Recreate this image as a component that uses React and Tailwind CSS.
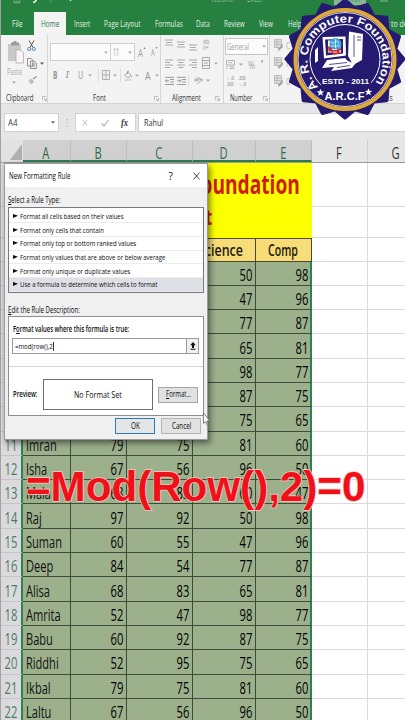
import { useLayoutEffect, useRef } from "react";

// Condenses a line of text horizontally so that it fills the width of its box.
function Fit({ className = "", children }) {
  const box = useRef(null);
  const line = useRef(null);
  useLayoutEffect(() => {
    const k = box.current.getBoundingClientRect().width / line.current.offsetWidth;
    line.current.style.transform = `scaleX(${k})`;
  }, []);
  return (
    <span ref={box} className={`block shrink-0 whitespace-nowrap ${className}`}>
      <span ref={line} className="inline-block origin-left">{children}</span>
    </span>
  );
}

const rows = [
  ["4", "", "", "", "50", "98"],
  ["5", "", "", "", "47", "96"],
  ["6", "", "", "", "77", "87"],
  ["7", "", "", "", "65", "81"],
  ["8", "", "", "", "98", "77"],
  ["9", "", "", "", "87", "75"],
  ["10", "", "", "", "75", "65"],
  ["11", "Imran", "79", "75", "81", "60"],
  ["12", "Isha", "67", "56", "96", "50"],
  ["13", "Mala", "68", "83", "60", "47"],
  ["14", "Raj", "97", "92", "50", "98"],
  ["15", "Suman", "60", "55", "47", "96"],
  ["16", "Deep", "84", "54", "77", "87"],
  ["17", "Alisa", "68", "83", "65", "81"],
  ["18", "Amrita", "52", "47", "98", "77"],
  ["19", "Babu", "60", "92", "87", "75"],
  ["20", "Riddhi", "52", "95", "75", "65"],
  ["21", "Ikbal", "79", "75", "81", "60"],
  ["22", "Laltu", "67", "56", "96", "50"],
];

const cols = "grid grid-cols-[22px_47.5px_56px_66px_63px_56px_56.5px_56px]";

function Caret({ className = "" }) {
  return (
    <svg viewBox="0 0 4 3" className={`h-[3px] w-[4px] shrink-0 fill-[#a9a9a9] ${className}`}>
      <path d="M0 .5h4L2 2.8z" />
    </svg>
  );
}

function Launcher({ className = "" }) {
  return (
    <svg viewBox="0 0 6 6" className={`h-[5px] w-[5px] shrink-0 fill-none stroke-[#a0a0a0] ${className}`} strokeWidth=".8">
      <path d="M.5 5V.5H5M2.3 2.3l3 3M5.4 2.8v2.6H2.8" />
    </svg>
  );
}

function Lines({ d, className = "" }) {
  return (
    <svg viewBox="0 0 8 9" className={`h-[9px] w-[8px] shrink-0 fill-none stroke-[#a3a3a3] ${className}`} strokeWidth=".9">
      <path d={d} />
    </svg>
  );
}

function TitleBar() {
  return (
    <div className="flex h-[12px] items-start overflow-hidden text-[#8fbf9f]">
      <svg viewBox="0 0 8 6" className="ml-[12px] h-[5px] w-[8px] shrink-0 fill-none stroke-[#7fb592]" strokeWidth="1">
        <path d="M.5 0v3.500h7V0M2.5 3.500V1.500h3v2" />
      </svg>
      <svg viewBox="0 0 42 5" className="ml-[11px] h-[5px] w-[42px] shrink-0 fill-none" strokeWidth="1.4">
        <path d="M4 0Q4 2 1 2.500" stroke="#fff" />
        <path d="M20 0Q16 1.500 19 2.400" stroke="#5c9c74" strokeWidth="1" />
        <path d="M38.500 0v1" stroke="#e8f4ec" />
      </svg>
      <Fit className="-mt-[6px] ml-[137px] w-[25px] text-[9px] leading-[10px]">VLOOKUP</Fit>
      <Fit className="-mt-[6px] ml-[11px] w-[15px] text-[9px] leading-[10px]">Excel</Fit>
      <div className="ml-[72px] h-[5px] w-[32px] shrink-0 bg-[#86b896]">
        <Fit className="-mt-[6px] ml-[8px] w-[18px] text-[9px] leading-[10px] text-[#2b7a4a]">Sign in</Fit>
      </div>
      <div className="ml-[14px] h-[2px] w-[8px] bg-[#5c9c74]" />
    </div>
  );
}

function Tabs() {
  return (
    <div className="flex h-[23px] items-center text-[9.5px] leading-none text-[#e4f3e9]">
      <Fit className="ml-[10.5px] w-[10.5px]">File</Fit>
      <div className="ml-[12px] flex h-[23px] w-[32px] shrink-0 items-center justify-center bg-[#f3f3f3] text-[#2b7a4a]">
        <Fit className="w-[18.5px]">Home</Fit>
      </div>
      <Fit className="ml-[7.5px] w-[16.5px]">Insert</Fit>
      <Fit className="ml-[14px] w-[36.5px]">Page Layout</Fit>
      <Fit className="ml-[14px] w-[27.5px]">Formulas</Fit>
      <Fit className="ml-[14px] w-[14px]">Data</Fit>
      <Fit className="ml-[14px] w-[20.5px]">Review</Fit>
      <Fit className="ml-[14px] w-[14px]">View</Fit>
      <Fit className="ml-[15px] w-[14px]">Help</Fit>
      <Fit className="ml-[46px] w-[60px]">Tell me what to do</Fit>
    </div>
  );
}

function ClipboardGroup() {
  return (
    <div className="flex w-[47px] shrink-0 flex-col border-r border-[#d6d6d6]">
      <div className="flex h-[56px]">
        <div className="flex w-[24px] flex-col items-start pl-[6px] pt-[5px]">
          <svg viewBox="0 0 17 24" className="h-[24px] w-[17px]">
            <path d="M1 4h13v17H1z" fill="#c9c9c9" />
            <path d="M4 2.500h2l1-1.500h2l1 1.500h2V5.500H4z" fill="#9c9c9c" />
            <path d="M9 10h5l2.500 2.500V23H9z" fill="#f7f3f6" stroke="#b5a9b3" strokeWidth=".8" />
          </svg>
          <Fit className="mt-[3px] w-[15px] text-[9px] leading-[10px] text-[#a8a8a8]">Paste</Fit>
          <Caret className="ml-[5px] mt-[4px]" />
        </div>
        <div className="flex flex-col pl-[2px] pt-[5px]">
          <svg viewBox="0 0 9 12" className="h-[12px] w-[9px] fill-none" strokeWidth="1">
            <path d="M2 .5l4 7M7 .5l-4 7" stroke="#555" />
            <circle cx="2.200" cy="9" r="1.600" stroke="#5b8fb0" />
            <circle cx="6.800" cy="9" r="1.600" stroke="#5b8fb0" />
          </svg>
          <div className="mt-[6px] flex items-center">
            <svg viewBox="0 0 10 11" className="h-[11px] w-[10px] fill-[#f7f7f7] stroke-[#777]" strokeWidth=".8">
              <path d="M.5.5H4L6 2.500V8H.5zM3.500 3H7L9.300 5v5.500H3.500zM5 6h3M5 8h3" />
            </svg>
            <svg viewBox="0 0 4 3" className="ml-[3px] h-[3px] w-[4px] fill-[#555]">
              <path d="M0 .5h4L2 2.800z" />
            </svg>
          </div>
          <svg viewBox="0 0 9 9" className="ml-[1px] mt-[7px] h-[9px] w-[9px]">
            <path d="M8.500.5L5 3" stroke="#999" strokeWidth="1.400" />
            <path d="M3 2.500l3 3-2.500 3L.5 5z" fill="#bdbdbd" />
          </svg>
        </div>
      </div>
      <div className="flex h-[12px] items-center text-[9px] leading-none text-[#333]">
        <Fit className="ml-[5px] mt-[1px] w-[27.5px]">Clipboard</Fit>
        <Launcher className="ml-[8px] mt-[2px]" />
      </div>
    </div>
  );
}

function FontGroup() {
  return (
    <div className="flex w-[113px] shrink-0 flex-col border-r border-[#d6d6d6]">
      <div className="flex h-[56px] flex-col">
        <div className="mt-[8px] flex h-[18px] items-center pl-[2px] text-[10px] leading-none text-[#a0a0a0]">
          <div className="flex h-[18px] w-[61px] shrink-0 items-center justify-end border border-[#cfcfcf] bg-[#fbfbfb] pr-[2px]">
            <Caret />
          </div>
          <div className="-ml-px flex h-[18px] w-[25px] shrink-0 items-center border border-[#cfcfcf] bg-[#fbfbfb] pl-[2px]">
            <Fit className="w-[6px]">11</Fit>
            <Caret className="ml-[9px]" />
          </div>
          <Fit className="ml-[3px] w-[5px] text-[11px]">A</Fit>
          <svg viewBox="0 0 3 3" className="-mt-[8px] h-[2px] w-[3px] fill-[#8a8a8a]"><path d="M0 3h3L1.500 0z" /></svg>
          <Fit className="ml-[5px] w-[4px] text-[9px]">A</Fit>
          <svg viewBox="0 0 3 3" className="-mt-[8px] h-[2px] w-[3px] fill-[#8a8a8a]"><path d="M0 0h3L1.500 3z" /></svg>
        </div>
        <div className="mt-[7px] flex h-[14px] items-center text-[10px] leading-none text-[#929292]">
          <Fit className="ml-[5px] w-[4.500px] font-bold">B</Fit>
          <span className="ml-[8px] w-[4px] font-serif italic">I</span>
          <Fit className="ml-[8px] w-[5px] underline">U</Fit>
          <Caret className="ml-[5px]" />
          <div className="ml-[6px] h-[13px] w-px bg-[#dcdcdc]" />
          <svg viewBox="0 0 8 10" className="ml-[3px] h-[10px] w-[8px] fill-none stroke-[#a0a0a0]" strokeWidth=".8">
            <path d="M.5.5h7v9h-7zM4 .5v9M.5 5h7" />
          </svg>
          <Caret className="ml-[3px]" />
          <div className="ml-[3px] h-[13px] w-px bg-[#dcdcdc]" />
          <svg viewBox="0 0 9 11" className="ml-[3px] h-[11px] w-[9px] fill-none stroke-[#a0a0a0]" strokeWidth=".9">
            <path d="M3.500 2L.8 5.500 4 8l3-3zM3.500 4V1.200q1-1 1 1M7.300 5.500v2" />
            <path d="M.5 10h7" stroke="#cfcfcf" strokeWidth="1.500" />
          </svg>
          <Caret className="ml-[2px]" />
          <Fit className="ml-[6px] w-[5.500px] text-[11px]">A</Fit>
          <Caret className="ml-[5px]" />
        </div>
      </div>
      <div className="flex h-[12px] items-center text-[9px] leading-none text-[#333]">
        <Fit className="ml-[45px] mt-[1px] w-[13px]">Font</Fit>
        <Launcher className="ml-[48px] mt-[2px]" />
      </div>
    </div>
  );
}

function AlignmentGroup() {
  return (
    <div className="flex w-[63px] shrink-0 flex-col border-r border-[#d6d6d6]">
      <div className="flex h-[56px] flex-col pl-[4px]">
        <div className="mt-[4px] flex h-[14px] items-start">
          <Lines d="M0 1h8M1 3.500h6M0 6h8" />
          <Lines className="ml-[4px] mt-[2px]" d="M0 1h8M1 3.500h6M0 6h8" />
          <Lines className="ml-[4px] mt-[5px]" d="M0 1h8M1 3.500h6M0 6h8" />
          <div className="ml-[6px] flex flex-col text-[7px] leading-[5.500px] text-[#999]">
            <Fit className="w-[6px]">ab</Fit>
            <Fit className="w-[6px]">c↵</Fit>
          </div>
        </div>
        <div className="mt-[4px] flex h-[12px] items-center">
          <Lines d="M0 1h8M0 3.500h5M0 6h8M0 8.500h5" />
          <Lines className="ml-[4px]" d="M0 1h8M1.500 3.500h5M0 6h8M1.500 8.500h5" />
          <Lines className="ml-[4px]" d="M0 1h8M3 3.500h5M0 6h8M3 8.500h5" />
          <svg viewBox="0 0 8 12" className="ml-[5px] h-[12px] w-[8px] fill-none stroke-[#a0a0a0]" strokeWidth=".9">
            <path d="M.5.5h7v11h-7zM.5 3.500h7M.5 8.500h7M2 6h4" />
          </svg>
          <Caret className="ml-[4px]" />
        </div>
        <div className="mt-[5px] flex h-[13px] items-center">
          <svg viewBox="0 0 9 9" className="h-[10px] w-[9px] fill-none stroke-[#929292]" strokeWidth=".9">
            <path d="M0 .8h9M5 3h4M5 5.500h4M0 8h9M4 4.300H.5M2 2.800L.5 4.300 2 5.800" />
          </svg>
          <svg viewBox="0 0 9 9" className="ml-[3px] h-[10px] w-[9px] fill-none stroke-[#929292]" strokeWidth=".9">
            <path d="M0 .8h9M5 3h4M5 5.500h4M0 8h9M0 4.300h4M2.500 2.800L4 4.300 2.500 5.800" />
          </svg>
          <div className="ml-[2px] h-[12px] w-px bg-[#dcdcdc]" />
          <svg viewBox="0 0 10 10" className="ml-[5px] h-[11px] w-[9px] fill-none stroke-[#999]" strokeWidth=".9">
            <path d="M3.500 9.500L9 4M7 3.800h2.200V6" />
            <circle cx="2" cy="4.500" r="1.300" />
            <path d="M3 3l1.500 3M4 1l2 4M5.500 2.500q2-.5 1.500 1.500" />
          </svg>
          <Caret className="ml-[3px]" />
        </div>
      </div>
      <div className="flex h-[12px] items-center text-[9px] leading-none text-[#333]">
        <Fit className="ml-[11px] mt-[1px] w-[29px]">Alignment</Fit>
        <Launcher className="ml-[14px] mt-[2px]" />
      </div>
    </div>
  );
}

function NumberGroup() {
  return (
    <div className="flex w-[46px] shrink-0 flex-col border-r border-[#d6d6d6] text-[#a0a0a0]">
      <div className="flex h-[56px] flex-col pl-[1px]">
        <div className="mt-[3px] flex h-[17px] w-[43px] items-center border border-[#c6c6c6] bg-[#fbfbfb] text-[9px] leading-none">
          <Fit className="ml-[1px] w-[22px]">General</Fit>
          <Caret className="ml-[13px]" />
        </div>
        <div className="mt-[3px] flex h-[12px] items-center leading-none">
          <svg viewBox="0 0 10 11" className="ml-[1px] h-[11px] w-[9px] fill-none stroke-[#a3a3a3]" strokeWidth=".9">
            <path d="M.5 1h9v5h-9zM3 3.500h4M4 8h5M4 10h5M1 7v3" />
          </svg>
          <Caret className="ml-[4px]" />
          <Fit className="ml-[5px] w-[7px] text-[11px]">%</Fit>
          <span className="ml-[6px] text-[10px] font-bold">’</span>
        </div>
        <div className="mt-[4px] flex h-[13px] items-center">
          <div className="ml-[1px] flex flex-col text-[6px] font-semibold leading-[6px]">
            <Fit className="w-[8px]">←.0</Fit>
            <Fit className="w-[8px]">.00</Fit>
          </div>
          <div className="ml-[4px] flex flex-col text-[6px] font-semibold leading-[6px]">
            <Fit className="w-[8px]">.00</Fit>
            <Fit className="w-[8px]">→.0</Fit>
          </div>
        </div>
      </div>
      <div className="flex h-[12px] items-center text-[9px] leading-none text-[#333]">
        <Fit className="ml-[6px] mt-[1px] w-[22.500px]">Number</Fit>
        <Launcher className="ml-[10px] mt-[2px]" />
      </div>
    </div>
  );
}

function StylesGroup() {
  return (
    <div className="flex w-[134px] shrink-0 justify-between pl-[4px] pt-[4px]">
      <div className="flex flex-col gap-[6px] text-[9px] leading-none text-[#b0b0b0]">
        {["C", "F", "C"].map((c, i) => (
          <div key={i} className="flex h-[12px] items-center gap-[3px]">
            <svg viewBox="0 0 9 12" className="h-[12px] w-[9px] fill-[#e2e2e2] stroke-[#b3b3b3]" strokeWidth=".8">
              <path d="M.5.5h7v8h-7zM.5 3h7M.5 5.500h7M3 .5v8" />
              <path d="M4 10l4.500-5v3L5 11.500z" fill="#a0a0a0" />
            </svg>
            <Fit className="w-[4px]">{c}</Fit>
          </div>
        ))}
      </div>
      <Fit className="mr-[11px] mt-[54px] w-[15px] text-[9px] leading-[10px] text-[#333]">Cells</Fit>
    </div>
  );
}

function FormulaBar() {
  return (
    <div className="flex h-[36px] items-start bg-[#e6e6e6] pl-[3px] pt-[9px] text-[9.500px] leading-none text-[#333]">
      <div className="flex h-[19px] w-[55px] items-center justify-between border border-[#d2d2d2] bg-white px-[3px]">
        <Fit className="w-[9px]">A4</Fit>
        <svg viewBox="0 0 4 3" className="h-[3px] w-[4px] fill-[#666]"><path d="M0 .3h4L2 2.800z" /></svg>
      </div>
      <svg viewBox="0 0 2 10" className="ml-[7px] mt-[5px] h-[10px] w-[2px] fill-[#aaa]">
        <path d="M.5 1h1v1h-1zM.5 4.500h1v1h-1zM.5 8h1v1h-1z" />
      </svg>
      <div className="ml-[7px] flex h-[19px] w-[61px] items-center border border-[#d2d2d2] bg-white">
        <svg viewBox="0 0 6 8" className="ml-[6px] h-[7px] w-[6px] fill-none stroke-[#b5b5b5]" strokeWidth="1"><path d="M.5 1l5 6M5.500 1l-5 6" /></svg>
        <svg viewBox="0 0 8 8" className="ml-[13px] h-[8px] w-[8px] fill-none stroke-[#b5b5b5]" strokeWidth="1.200"><path d="M.5 4.500L3 7l4.500-6" /></svg>
        <Fit className="ml-[12px] w-[7px] font-['Liberation_Serif',serif] text-[11px] font-bold italic">fx</Fit>
      </div>
      <div className="ml-[2px] flex h-[19px] flex-1 items-center border border-r-0 border-[#d2d2d2] bg-white pl-[5px]">
        <Fit className="w-[19px]">Rahul</Fit>
      </div>
    </div>
  );
}

function Sheet() {
  const blank = "border-b border-r border-[#dadada] bg-white";
  const filled = "flex items-center justify-end border-b border-r border-[#3e4c3a] bg-[#9cb08c] pr-[2px] text-black";
  const digits = "inline-block origin-right scale-x-[0.7]";
  return (
    <div className="font-['Open_Sans',sans-serif] text-[16px] leading-none">
      <div className={`${cols} h-[23px] border-b border-[#9b9b9b] text-center text-[15.500px] leading-[26px] text-[#2f6b4a]`}>
        <div className="flex items-end justify-end bg-[#e2e2e2] pb-[2px] pr-[1px]">
          <svg viewBox="0 0 12 16" className="h-[16px] w-[12px] fill-[#b1b1b1]"><path d="M12 0v16H0z" /></svg>
        </div>
        {["A", "B", "C", "D", "E"].map((c) => (
          <div key={c} className="overflow-hidden border-b-2 border-r border-b-[#2f7a50] border-r-[#bdbdbd] bg-[#d0d0d0]">
            <span className="inline-block scale-x-[0.72]">{c}</span>
          </div>
        ))}
        {["F", "G"].map((c) => (
          <div key={c} className="overflow-hidden border-r border-[#cfcfcf] bg-[#e6e6e6] text-[#333]">
            <span className="inline-block scale-x-[0.72]">{c}</span>
          </div>
        ))}
      </div>
      <div className={`${cols} grid-rows-[43.500px_31px]`}>
        <div className="border-b border-[#c4c4c4] bg-[#dedee0]" />
        <div className="col-span-5 row-span-2 flex flex-col bg-[#fbff00] font-bold text-[#cf1b10]">
          <Fit className="ml-[167px] mt-[6px] w-[110px] text-[27px] leading-[30px]">Foundation</Fit>
          <Fit className="ml-[146px] mt-[6px] w-[43px] text-[21px] leading-[24px]">Sheet</Fit>
        </div>
        <div className={blank} />
        <div className={blank} />
        <div className="border-b border-[#c4c4c4] bg-[#dedee0]" />
        <div className={blank} />
        <div className={blank} />
      </div>
      <div className={`${cols} h-[24px] text-[15.500px] font-semibold text-[#1c1a10]`}>
        <div className="border-b border-[#c4c4c4] bg-[#dedee0]" />
        <div className="col-span-3 border-y border-[#4b4630] bg-[#f7dc77]" />
        <div className="flex items-center border-y border-r border-[#4b4630] bg-[#f7dc77] pt-[2px]">
          <Fit className="ml-[5px] w-[45px]">Science</Fit>
        </div>
        <div className="flex items-center justify-center border-y border-r border-[#4b4630] bg-[#f7dc77] pt-[2px]">
          <Fit className="w-[30px]">Comp</Fit>
        </div>
        <div className={blank} />
        <div className={blank} />
      </div>
      {rows.map(([n, name, ...marks]) => (
        <div key={n} className={`${cols} h-[24.300px]`}>
          <div className="flex items-center justify-end border-b border-r-2 border-b-[#c4c4c8] border-r-[#2f8055] bg-[#dadadd] pr-[4px] pt-[3px] text-[#4b7c62]">
            <span className={digits}>{n}</span>
          </div>
          <div className="flex items-center border-b border-r border-[#3e4c3a] bg-[#9cb08c] pl-[2.500px] pt-[3px] text-[#111]">
            <span className="inline-block origin-left scale-x-[0.69]">{name}</span>
          </div>
          {marks.slice(0, 3).map((m, i) => (
            <div key={i} className={`${filled} pt-[3px]`}>
              <span className={digits}>{m}</span>
            </div>
          ))}
          <div className="flex items-center justify-end border-b border-r-2 border-b-[#3e4c3a] border-r-[#2f8055] bg-[#9cb08c] pr-[1px] pt-[3px] text-black">
            <span className={digits}>{marks[3]}</span>
          </div>
          <div className={blank} />
          <div className={blank} />
        </div>
      ))}
    </div>
  );
}

function Rule({ width, active, children }) {
  return (
    <div className={`flex h-[13.700px] items-center border-b border-[#ececec] pl-[4px] ${active ? "bg-[#dfdfe6]" : ""}`}>
      <svg viewBox="0 0 5 4" className="h-[4px] w-[5px] shrink-0 fill-[#111]"><path d="M0 0l5 1.800L0 4z" /></svg>
      <Fit className={`ml-[2px] ${width}`}>{children}</Fit>
    </div>
  );
}

function RuleDialog() {
  return (
    <div className="absolute left-[3px] top-[163px] flex h-[277px] w-[204px] flex-col border border-[#9a9a9a] bg-[#f0f0f0] font-['Open_Sans',sans-serif] text-[8.500px] leading-none text-[#0c0c0c] shadow-[2px_3px_6px_rgba(0,0,0,0.5)]">
      <div className="flex h-[23px] items-center bg-white text-[9px]">
        <Fit className="ml-[4px] w-[61.500px]">New Formatting Rule</Fit>
        <Fit className="ml-[98px] w-[4px] text-[10px]">?</Fit>
        <svg viewBox="0 0 7 8" className="ml-[20px] h-[8px] w-[7px] fill-none stroke-[#333]" strokeWidth=".9"><path d="M.5.5l6 7M6.500.5l-6 7" /></svg>
      </div>
      <Fit className="ml-[3px] mt-[8px] h-[12px] w-[52px] leading-[10px]"><u>S</u>elect a Rule Type:</Fit>
      <div className="mx-[3px] h-[86px] border border-[#757a80] bg-white pt-[1.500px] text-[8px]">
        <Rule width="w-[104px]">Format all cells based on their values</Rule>
        <Rule width="w-[84px]">Format only cells that contain</Rule>
        <Rule width="w-[116px]">Format only top or bottom ranked values</Rule>
        <Rule width="w-[145.500px]">Format only values that are above or below average</Rule>
        <Rule width="w-[110px]">Format only unique or duplicate values</Rule>
        <Rule width="w-[137px]" active>Use a formula to determine which cells to format</Rule>
      </div>
      <Fit className="ml-[3px] mt-[12px] h-[11px] w-[72px] leading-[10px]"><u>E</u>dit the Rule Description:</Fit>
      <div className="mx-[3px] flex h-[100px] flex-col border border-[#8b8f93] bg-white">
        <Fit className="ml-[4px] mt-[6px] h-[15px] w-[116px] font-semibold leading-[11px]">F<u>o</u>rmat values where this formula is true:</Fit>
        <div className="ml-[3px] flex h-[16px] w-[187px] items-center justify-between border border-[#9a9a9a] bg-white">
          <div className="flex items-center pl-[2px]">
            <Fit className="w-[38px] text-[8px]">=mod(row(),2</Fit>
            <div className="h-[9px] w-px bg-[#333]" />
          </div>
          <div className="flex h-[14px] w-[12px] items-center justify-center border-l border-[#9a9a9a] bg-[#f0f0f0]">
            <svg viewBox="0 0 6 8" className="h-[8px] w-[6px] fill-[#111]"><path d="M3 0l2.800 3.300H4V6H2V3.300H.2zM.5 6.800h5v1h-5z" /></svg>
          </div>
        </div>
        <div className="mt-[12px] h-px bg-[#d4d4d4]" />
        <div className="mt-[12px] flex h-[31px] items-center">
          <Fit className="ml-[4px] w-[24.500px] font-semibold">Preview:</Fit>
          <div className="ml-[5.500px] flex h-[31px] w-[110px] items-center justify-center border border-[#6f6f6f]">
            <Fit className="w-[48px] text-[9.500px]">No Format Set</Fit>
          </div>
          <div className="ml-[5px] flex h-[16px] w-[40px] items-center justify-center border border-[#a5a5a5] bg-[#e1e1e1]">
            <Fit className="w-[25px]"><u>F</u>ormat...</Fit>
          </div>
        </div>
      </div>
      <div className="mt-[2px] flex">
        <div className="ml-[110px] flex h-[16px] w-[40px] items-center justify-center border-[1.500px] border-[#2f7cb8] bg-[#e3e5e8]">
          <Fit className="w-[9px]">OK</Fit>
        </div>
        <div className="ml-[6px] flex h-[16px] w-[40px] items-center justify-center border border-[#b5b5b5] bg-[#e1e1e1]">
          <Fit className="w-[19px]">Cancel</Fit>
        </div>
      </div>
    </div>
  );
}

const star = Array.from({ length: 32 }, (_, i) => {
  const a = (i * Math.PI) / 16 - Math.PI / 2;
  const r = i % 2 ? 51.5 : 58.8;
  return `${(61 + r * Math.cos(a)).toFixed(1)},${(61 + r * Math.sin(a)).toFixed(1)}`;
}).join(" ");

function Badge() {
  return (
    <svg viewBox="0 0 122 122" className="absolute left-[282.500px] top-[-2px] h-[122px] w-[122px] font-['Liberation_Sans',sans-serif]">
      <polygon points={star} fill="#241b70" stroke="#241b70" strokeWidth="3.500" strokeLinejoin="round" />
      <circle cx="61" cy="61.500" r="49.500" fill="#241b70" stroke="#dfa83a" strokeWidth="4" />
      <circle cx="61" cy="61.500" r="47" fill="none" stroke="#fff" strokeWidth=".8" />
      <circle cx="61" cy="61.500" r="35" fill="none" stroke="#fff" strokeWidth="1" />
      <path id="ring" d="M34.500 89A37.700 37.700 0 1 1 87.500 89" fill="none" />
      <text fill="#fff" fontSize="11.500" fontWeight="700">
        <textPath href="#ring" textLength="172" lengthAdjust="spacingAndGlyphs">A. R. Computer Foundation</textPath>
      </text>
      <rect x="37" y="79" width="50" height="22" fill="#241b70" />
      <g transform="translate(27 33)">
        <path d="M4 19l3-3v14l-3 2zM11.500 6l23-.5.500 19-22 3z" fill="#fff" />
        <path d="M14 8.500l18-.5v14.500L15 24.500z" fill="#2a2175" />
        <path d="M38 .5l14 2.500-1 26-9 5-5-9z" fill="#fff" />
        <path d="M43 4v22M46 6h4M46 9h4" stroke="#2a2175" strokeWidth=".8" />
        <path d="M16 29l18-2 3 3 7 3-3 4-21 3 3-4-12 1z" fill="#fff" />
        <path d="M18 33.500l18-2M26 36.500l13-2" stroke="#2a2175" strokeWidth=".8" />
        <path d="M17 9.500h12l1 12H17z" fill="#f7f4f4" />
        <path d="M17 15.500h11l2.500 3-2 1v3.500l-6 .5-2-3h-3z" fill="#d62b2f" />
        <circle cx="24.500" cy="13" r="6" fill="#3aa3d8" />
        <path d="M20 11q2 3 4 0t4 2M24.500 8v9M20 15h9" stroke="#fff" strokeWidth=".7" fill="none" />
        <path d="M21 18.500h5M22 21h4" stroke="#fff" strokeWidth=".8" />
      </g>
      <text x="38" y="86" fill="#fff" fontSize="6.800" fontWeight="700" textLength="47" lengthAdjust="spacingAndGlyphs">ESTD - 2011</text>
      <text x="40.500" y="101.500" fill="#fff" fontSize="10.500" fontWeight="700" textLength="40" lengthAdjust="spacingAndGlyphs">A.R.C.F</text>
      <path d="M0-3.800l1 2.600 2.800.1-2.200 1.700.8 2.700L0 1.700l-2.400 1.600.8-2.700L-3.800-1.100-1-1.200z" transform="translate(36.500 94.500)" fill="#fff" />
      <path d="M0-3.800l1 2.600 2.800.1-2.200 1.700.8 2.700L0 1.700l-2.400 1.600.8-2.700L-3.800-1.100-1-1.200z" transform="translate(84.500 94)" fill="#fff" />
    </svg>
  );
}

export default function App() {
  return (
    <div className="relative h-[720px] w-[405px] overflow-hidden border-l border-[#a2a2a2] bg-white font-['Open_Sans',sans-serif]">
      <div className="bg-[#26803f]">
        <TitleBar />
        <Tabs />
      </div>
      <div className="flex h-[69px] border-b border-[#d5d5d5] bg-[#f3f3f3]">
        <ClipboardGroup />
        <FontGroup />
        <AlignmentGroup />
        <NumberGroup />
        <StylesGroup />
      </div>
      <FormulaBar />
      <Sheet />
      <RuleDialog />
      <svg viewBox="0 0 7 14" className="absolute left-[202px] top-[412px] h-[14px] w-[7px] fill-white stroke-[#666]" strokeWidth=".8">
        <path d="M.5.8v10.700l2-2 1.600 3.800 1.200-.6-1.500-3.700h2.700z" />
      </svg>
      <Badge />
      <Fit className="absolute left-[25px] top-[462px] w-[339px] font-['Liberation_Sans',sans-serif] text-[42px] font-bold leading-[50px] text-[#f0101a] [-webkit-text-stroke:1.500px_#f3c9c0] [paint-order:stroke_fill]">
        =Mod(Row(),2)=0
      </Fit>
    </div>
  );
}
